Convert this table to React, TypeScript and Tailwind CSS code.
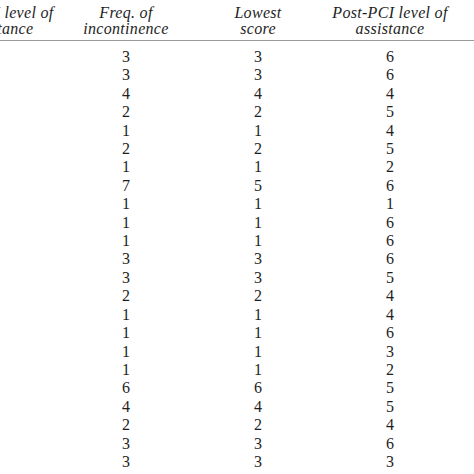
const freq = [3, 3, 4, 2, 1, 2, 1, 7, 1, 1, 1, 3, 3, 2, 1, 1, 1, 1, 6, 4, 2, 3, 3];
const lowest = [3, 3, 4, 2, 1, 2, 1, 5, 1, 1, 1, 3, 3, 2, 1, 1, 1, 1, 6, 4, 2, 3, 3];
const post = [6, 6, 4, 5, 4, 5, 2, 6, 1, 6, 6, 6, 5, 4, 4, 6, 3, 2, 5, 5, 4, 6, 3];

const headers = [
  ["Pre-PCI level of", "assistance"],
  ["Freq. of", "incontinence"],
  ["Lowest", "score"],
  ["Post-PCI level of", "assistance"],
];

export default function App() {
  return (
    <div
      className="h-[474px] w-[474px] overflow-hidden bg-white text-[16px] text-[#1e1e1e]"
      style={{ fontFamily: '"Liberation Serif", "Times New Roman", serif' }}
    >
      <div className="ml-[-72px] w-[546px]">
        {/* Header */}
        <div className="grid grid-cols-[132px_132px_132px_132px] border-b-[1.5px] border-[#9a9a9a] pb-[3px] pt-[5px]">
          {headers.map((h, i) => (
            <div
              key={i}
              className={`text-center italic leading-[16px] tracking-[0.3px] ${i === 0 ? "pl-[10px]" : ""}`}
            >
              <div className="whitespace-nowrap">{h[0]}</div>
              <div className="whitespace-nowrap">{h[1]}</div>
            </div>
          ))}
        </div>

        {/* Rows */}
        <div className="pt-[7px]">
          {freq.map((f, i) => (
            <div key={i} className="grid grid-cols-[132px_132px_132px_132px] leading-[18.4px]">
              <div />
              <div className="text-center">{f}</div>
              <div className="text-center">{lowest[i]}</div>
              <div className="text-center">{post[i]}</div>
            </div>
          ))}
        </div>
      </div>
    </div>
  );
}
